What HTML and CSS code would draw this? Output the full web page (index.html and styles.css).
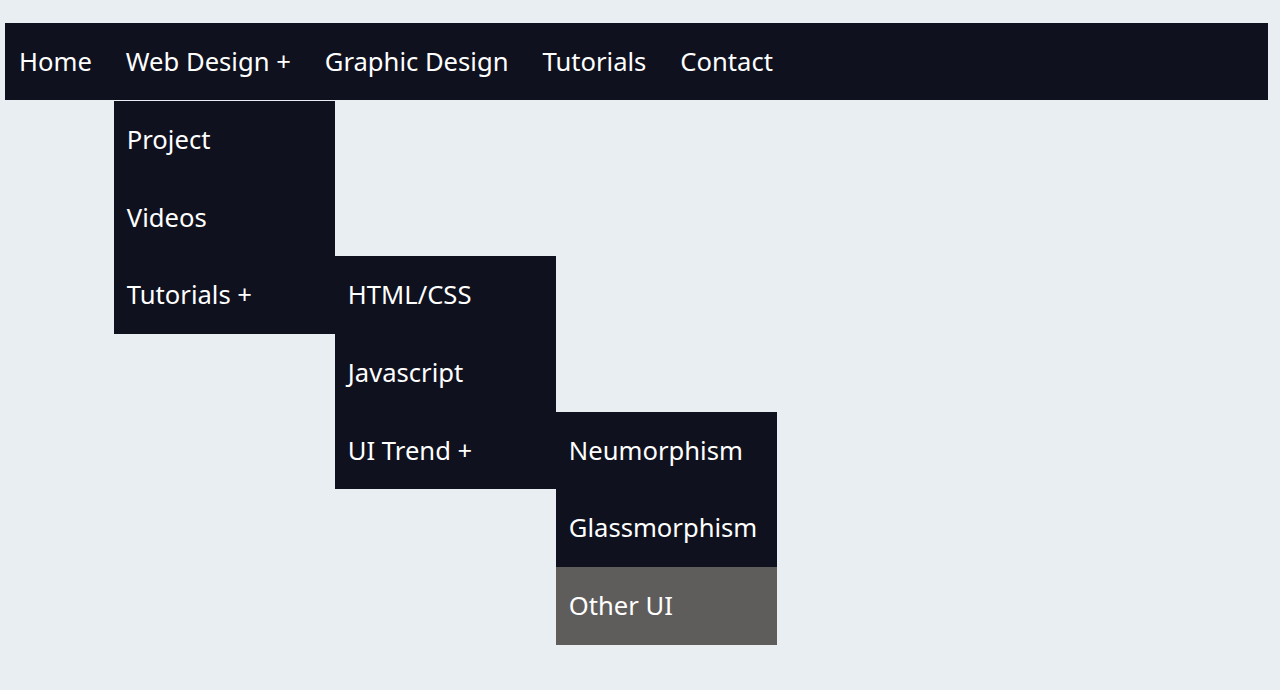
FILE: index.html
```html
<!DOCTYPE html>
<html lang="en">
<head>
  <meta charset="UTF-8" />
  <meta name="viewport" content="width=device-width, initial-scale=1.0"/>
  <title>Dropdown Menu</title>
  <link rel="stylesheet" href="styles.css">
</head>
<body>

  <nav class="menu-bar">
    <ul class="menu">
      <li><a href="#">Home</a></li>
      <li class="open">
        <a href="#">Web Design +</a>
        <ul class="dropdown">
          <li><a href="#">Project</a></li>
          <li><a href="#">Videos</a></li>
          <li class="open">
            <a href="#">Tutorials +</a>
            <ul class="dropdown sub">
              <li><a href="#">HTML/CSS</a></li>
              <li><a href="#">Javascript</a></li>
              <li class="open">
                <a href="#">UI Trend +</a>
                <ul class="dropdown sub">
                  <li><a href="#">Neumorphism</a></li>
                  <li><a href="#">Glassmorphism</a></li>
                  <li class="active"><a href="#">Other UI</a></li>
                </ul>
              </li>
            </ul>
          </li>
        </ul>
      </li>
      <li><a href="#">Graphic Design</a></li>
      <li><a href="#">Tutorials</a></li>
      <li><a href="#">Contact</a></li>
    </ul>
  </nav>

</body>
</html>
```

FILE: styles.css
```css
* {
  margin: 0;
  padding: 0;
  box-sizing: border-box;
}

body {
  font-family: 'Noto Sans', 'Open Sans', sans-serif;
  background: #e9eef3;
  padding: 23px 12px 0 5px;
  min-height: 100vh;
}

ul {
  list-style: none;
}

a {
  color: #fff;
  text-decoration: none;
}

.menu-bar {
  background: #10111e;
  height: 77px;
  padding-left: 2px;
}

.menu {
  display: flex;
  height: 100%;
}

.menu > li {
  position: relative;
}

.menu > li > a {
  display: block;
  padding: 0 12px;
  margin-right: 10px;
  line-height: 77px;
  font-size: 25.6px;
}

.dropdown {
  display: none;
  position: absolute;
  top: calc(100% + 1px);
  left: 0;
  width: 221px;
  background: #10111e;
}

.open > .dropdown {
  display: block;
}

.dropdown li {
  position: relative;
}

.dropdown a {
  display: block;
  height: 77.7px;
  line-height: 77.7px;
  padding: 0 12px 0 13px;
  font-size: 25.6px;
}

.dropdown.sub {
  top: 0;
  left: 100%;
}

.dropdown .active > a {
  background: #5f5d5c;
}
```
